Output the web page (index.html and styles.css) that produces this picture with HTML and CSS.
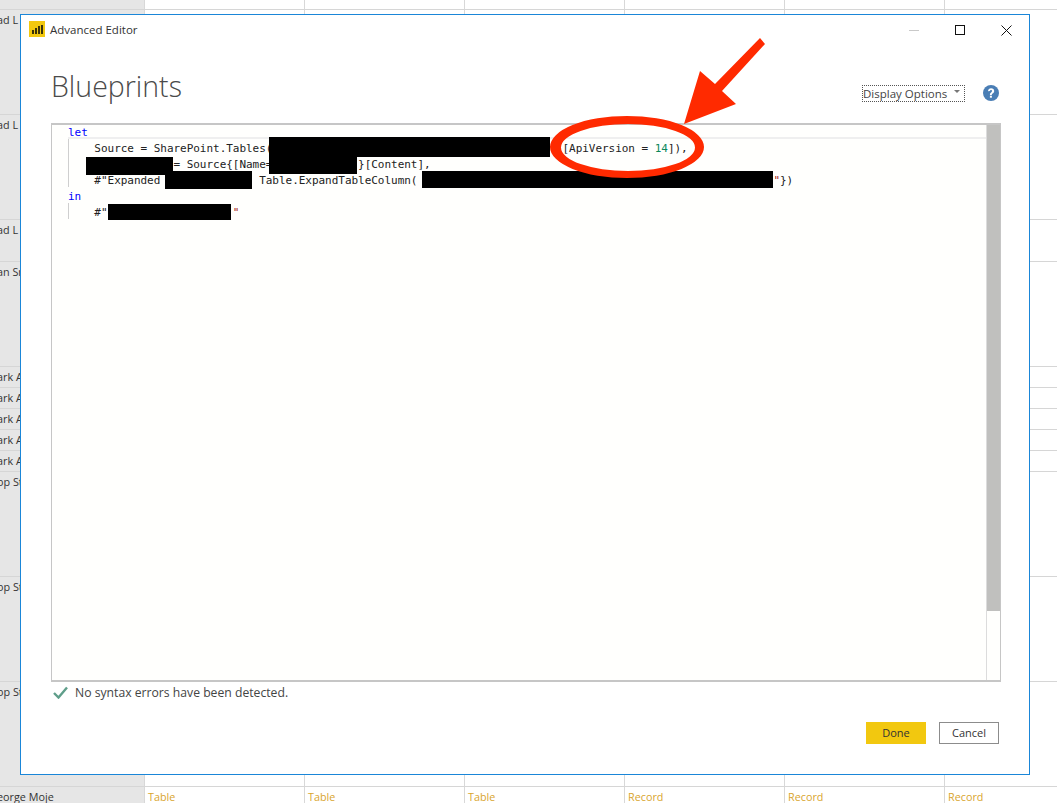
FILE: index.html
```html
<!DOCTYPE html>
<html lang="en">
<head>
<meta charset="utf-8">
<title>Advanced Editor</title>
<link rel="stylesheet" href="styles.css">
</head>
<body>
<div class="sheet">
  <div class="row h9"><div class="label"></div></div>
  <div class="row h105"><div class="label">ad L</div></div>
  <div class="row h105"><div class="label">ad L</div></div>
  <div class="row h42"><div class="label">ad L</div></div>
  <div class="row h105"><div class="label">an Sn</div></div>
  <div class="row h21"><div class="label">ark A</div></div>
  <div class="row h21"><div class="label">ark A</div></div>
  <div class="row h21"><div class="label">ark A</div></div>
  <div class="row h21"><div class="label">ark A</div></div>
  <div class="row h21"><div class="label">ark A</div></div>
  <div class="row h105"><div class="label">op St</div></div>
  <div class="row h105"><div class="label">op St</div></div>
  <div class="row h105"><div class="label">op St</div></div>
  <div class="row last">
    <div class="label">eorge Moje</div>
    <div class="value">Table</div>
    <div class="value">Table</div>
    <div class="value">Table</div>
    <div class="value">Record</div>
    <div class="value">Record</div>
    <div class="value">Record</div>
  </div>
</div>

<section class="dialog">
  <header class="titlebar">
    <svg class="logo" viewBox="0 0 16 16" aria-hidden="true">
      <rect width="16" height="16" fill="#f2c80f"/>
      <path d="M3 9h2v4H3zM6 7h2v6H6zM9 5h2v8H9zM12 4h2v9h-2z" fill="#3a3208"/>
    </svg>
    <span class="title">Advanced Editor</span>
    <div class="controls">
      <svg class="ctl" viewBox="0 0 11 11" aria-hidden="true"><path d="M0 5.5h10" stroke="#c9c9c9" fill="none"/></svg>
      <svg class="ctl" viewBox="0 0 11 11" aria-hidden="true"><rect x="0.5" y="0.5" width="9" height="9" stroke="#111" fill="none"/></svg>
      <svg class="ctl" viewBox="0 0 11 11" aria-hidden="true"><path d="M0.5 0.5l10 10M10.5 0.5l-10 10" stroke="#111" fill="none"/></svg>
    </div>
  </header>

  <div class="heading">
    <h1>Blueprints</h1>
    <div class="display-options">Display Options<svg class="caret" viewBox="0 0 6 4" aria-hidden="true"><path d="M0 0h6L3 3z" fill="#777"/></svg></div>
    <svg class="help" viewBox="0 0 16 16" aria-hidden="true">
      <circle cx="8" cy="8" r="8" fill="#4a7eb5"/>
      <path d="M5 6.200C5.100 4.300 6.400 3.200 8.100 3.200c1.800 0 3.100 1.100 3.100 2.700 0 1.200-.6 1.900-1.500 2.500-.7.500-.9.800-.9 1.600H6.900c0-1.300.3-2 1.200-2.600.6-.5.900-.8.900-1.400 0-.6-.4-1-1-1-.7 0-1.100.4-1.200 1.100z" fill="#fff"/>
      <rect x="6.900" y="10.700" width="2" height="2" fill="#fff"/>
    </svg>
  </div>

  <div class="editor">
    <div class="code-area">
      <div class="current-line"></div>
      <div class="guide g1"></div>
      <div class="guide g2"></div>
      <pre class="code"><span class="kw">let</span>
    Source = SharePoint.Tables(                                            [ApiVersion = <span class="num">14</span>]),
                = Source{[Name=             }[Content],
    #"Expanded               Table.ExpandTableColumn(                                                      <span class="str">"</span>})
<span class="kw">in</span>
    #"                   <span class="str">"</span></pre>
      <i class="redact r1"></i>
      <i class="redact r2"></i>
      <i class="redact r3"></i>
      <i class="redact r4"></i>
      <i class="redact r5"></i>
      <i class="redact r6"></i>
    </div>
    <div class="scrollbar"><div class="thumb"></div></div>
  </div>

  <div class="status">
    <svg class="check" viewBox="0 0 15 13" aria-hidden="true"><path d="M1 7l4.500 4.500L14 1.500" stroke="#5f9e8a" stroke-width="2.400" fill="none"/></svg>
    <span>No syntax errors have been detected.</span>
  </div>

  <footer class="actions">
    <button class="btn primary" type="button">Done</button>
    <button class="btn" type="button">Cancel</button>
  </footer>
</section>

<svg class="annotation" viewBox="0 0 1057 803" aria-hidden="true">
  <path fill-rule="evenodd" fill="#ff2a00" d="M550 147a77 31 0 1 0 154 0a77 31 0 1 0-154 0zM561 147.500a67 23.500 0 1 0 134 0a67 23.500 0 1 0-134 0z"/>
  <path d="M760 38L765 44L722 91L736 104L684 124L700 71L715 84Z" fill="#ff2a00"/>
</svg>
</body>
</html>
```
FILE: styles.css
```css
* { box-sizing: border-box; }

html, body {
  margin: 0;
  height: 100%;
  overflow: hidden;
  background: #fff;
  font-family: "Open Sans", "Noto Sans", sans-serif;
  color: #333;
}

.sheet {
  width: 1104px;
  height: 803px;
  background-image: linear-gradient(90deg, #e6e6e6 0, #e6e6e6 144px, transparent 144px),
    repeating-linear-gradient(90deg, transparent 0, transparent 144px, #d8d8d8 144px, #d8d8d8 145px, transparent 145px, transparent 160px);
}

.row {
  display: grid;
  grid-template-columns: 144px repeat(6, 160px);
  border-bottom: 1px solid #d6d6d6;
  font-size: 10.800px;
  line-height: 16px;
}

.h9 { height: 10px; }
.h105 { height: 105px; }
.h42 { height: 42px; }
.h21 { height: 21px; }
.last { border-bottom: 0; height: 17px; }

.label {
  padding-top: 2px;
  margin-left: -3px;
  color: #333;
  overflow: hidden;
  white-space: nowrap;
}

.value {
  padding: 2px 0 0 4px;
  color: #d9a52f;
}

.dialog {
  position: absolute;
  left: 20px;
  top: 14px;
  width: 1010px;
  height: 761px;
  background: #fff;
  border: 1px solid #1a86d8;
  display: flex;
  flex-direction: column;
}

.titlebar {
  display: flex;
  align-items: center;
  height: 28px;
  padding: 0 17px 0 8px;
}

.logo { width: 16px; height: 16px; flex: none; }

.title {
  margin-left: 5px;
  font-size: 11.500px;
  color: #333;
}

.controls {
  margin-left: auto;
  margin-top: 2px;
  display: flex;
  gap: 35px;
}

.ctl { width: 11px; height: 11px; display: block; }

.heading {
  display: flex;
  align-items: center;
  height: 80px;
  padding: 20px 30px 0 30px;
}

h1 {
  margin: 0 0 14px;
  font-size: 28.500px;
  font-weight: 300;
  color: #4a4a4a;
  line-height: 40px;
}

.display-options {
  margin-left: auto;
  width: 103px;
  height: 17px;
  border: 1px dotted #555;
  font-size: 11.500px;
  line-height: 15px;
  color: #444;
  display: flex;
  align-items: center;
  justify-content: space-between;
  padding-right: 4px;
}

.caret { width: 6px; height: 4px; margin-bottom: 3px; }

.help {
  width: 16px;
  height: 16px;
  margin-left: 18px;
}

.editor {
  margin: 0 28px 0 30px;
  height: 559px;
  flex: none;
  border: 2px solid #c6c6c6;
  border-width: 2px 1px 2px 1px;
  background: #fffffd;
  display: flex;
}

.code-area {
  position: relative;
  flex: 1;
  min-width: 0;
}

.current-line {
  position: absolute;
  left: 16px;
  right: 0;
  top: 0;
  height: 14px;
  border-bottom: 2px solid #efefef;
}

.guide {
  position: absolute;
  left: 16px;
  width: 1px;
  background: #cfcfcf;
}

.g1 { top: 14px; height: 48px; }
.g2 { top: 78px; height: 16px; }

.code {
  position: relative;
  margin: 0;
  padding: 0 0 0 16px;
  font-family: "DejaVu Sans Mono", "Liberation Mono", monospace;
  font-size: 11px;
  letter-spacing: -0.030px;
  line-height: 16px;
  color: #222;
}

.kw { color: #0000ff; }
.num { color: #09885a; }
.str { color: #a31515; }

.redact {
  position: absolute;
  background: #000;
}

.r1 { left: 217px; top: 12px; width: 281px; height: 20px; }
.r2 { left: 217px; top: 32px; width: 88px; height: 17px; }
.r3 { left: 34px; top: 32px; width: 87px; height: 18px; }
.r4 { left: 113px; top: 46px; width: 87px; height: 18px; }
.r5 { left: 370px; top: 46px; width: 351px; height: 17px; }
.r6 { left: 56px; top: 79px; width: 123px; height: 16px; }

.scrollbar {
  width: 14px;
  flex: none;
  border-left: 1px solid #dcdcdc;
}

.thumb {
  height: 486px;
  background: #c0c0be;
}

.status {
  display: flex;
  align-items: center;
  height: 20px;
  margin: 0 0 0 32px;
  font-size: 12.200px;
  color: #444;
}

.check { width: 15px; height: 13px; margin-right: 7px; }

.actions {
  display: flex;
  justify-content: flex-end;
  gap: 13px;
  margin-top: 20px;
  padding-right: 30px;
}

.btn {
  width: 60px;
  height: 22px;
  padding: 0 0 2px;
  background: #fff;
  border: 1px solid #8c8c8c;
  font: inherit;
  font-size: 11px;
  color: #333;
}

.primary {
  background: #f2c80f;
  border-color: #f2c80f;
}

.annotation {
  position: absolute;
  left: 0;
  top: 0;
  width: 1057px;
  height: 803px;
  pointer-events: none;
}
```
